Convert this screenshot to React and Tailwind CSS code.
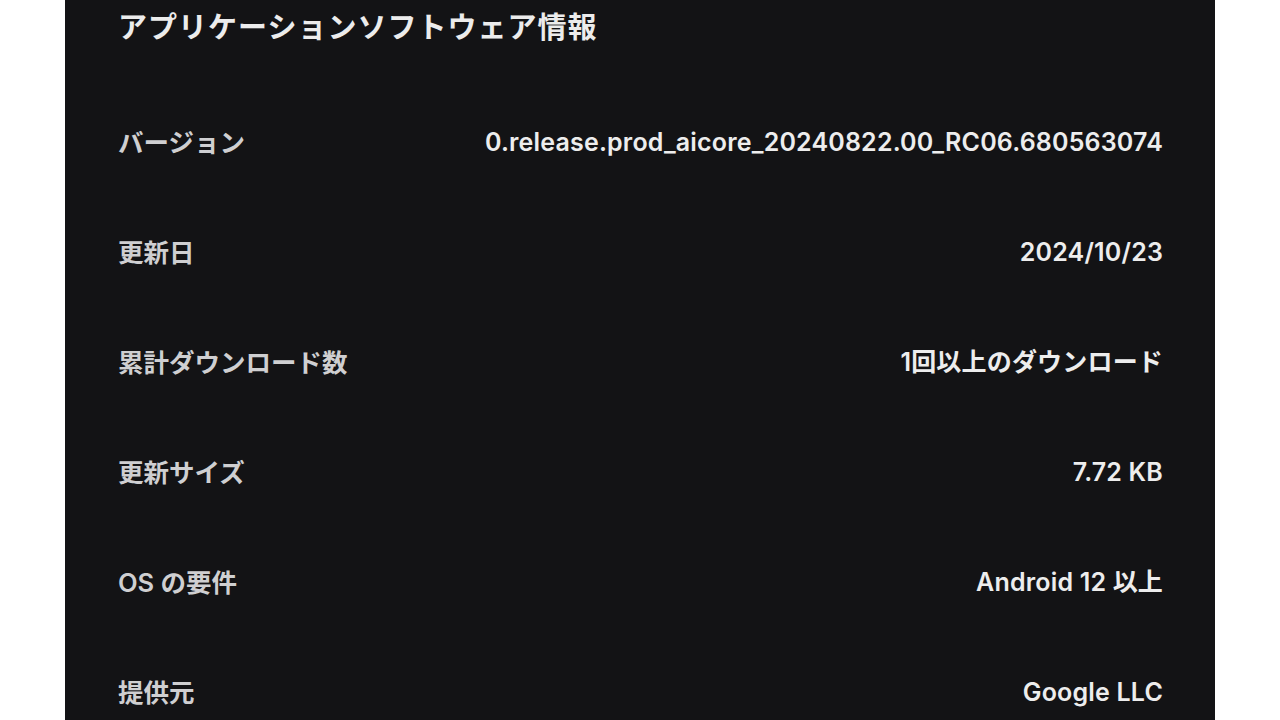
const rows = [
  { label: 'バージョン', value: '0.release.prod_aicore_20240822.00_RC06.680563074' },
  { label: '更新日', value: '2024/10/23' },
  { label: '累計ダウンロード数', value: '1回以上のダウンロード' },
  { label: '更新サイズ', value: '7.72 KB' },
  { label: 'OS の要件', value: 'Android 12 以上' },
  { label: '提供元', value: 'Google LLC' },
];

const App = () => {
  return (
    <div className="w-[1280px] h-[720px] overflow-hidden bg-white flex justify-center font-['Inter','Noto_Sans_CJK_JP',sans-serif]">
      <div className="w-[1150px] h-full bg-[#131315] pl-[53px] pr-[52px]">
        {/* Header */}
        <div className="h-[88px] pt-[10px]">
          <h1 className="text-[29px] leading-[36px] font-semibold text-[#ececec] tracking-[1px]">
            アプリケーションソフトウェア情報
          </h1>
        </div>

        {/* Info rows */}
        {rows.map((row) => (
          <div key={row.label} className="h-[110px] flex items-center justify-between">
            <span className="text-[25.5px] font-semibold text-[#cfcfd1]">{row.label}</span>
            <span className="text-[25px] font-semibold tracking-[0.18px] text-[#ededed]">{row.value}</span>
          </div>
        ))}
      </div>
    </div>
  );
};

export default App;
